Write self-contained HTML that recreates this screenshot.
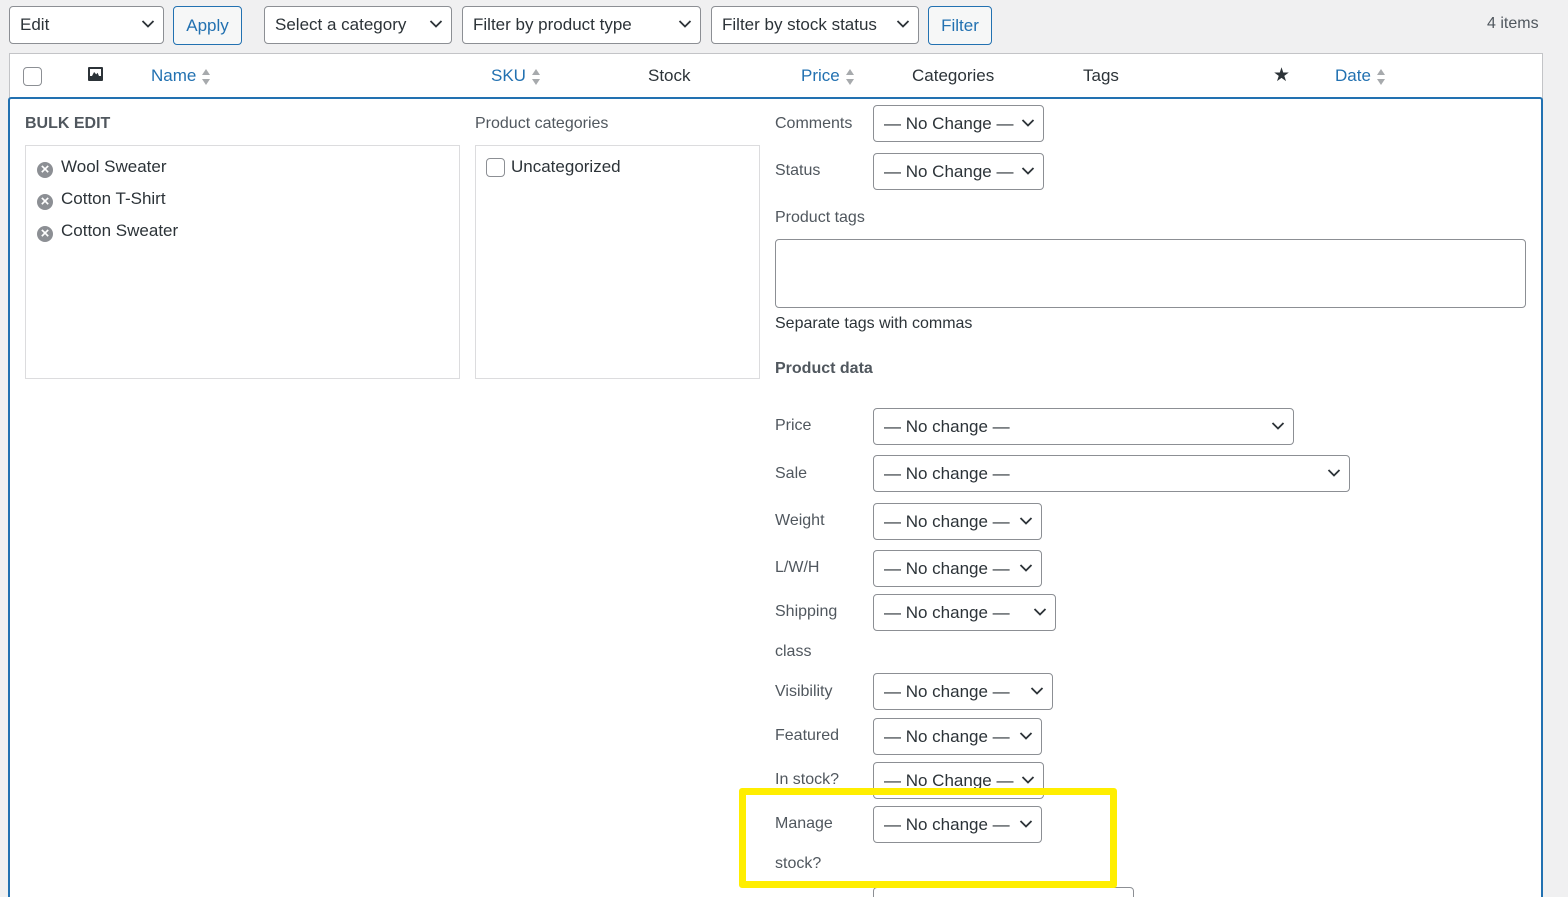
<!DOCTYPE html>
<html><head><meta charset="utf-8"><style>
*{box-sizing:border-box;margin:0;padding:0}
html,body{width:1568px;height:897px;overflow:hidden}
body{background:#f0f0f1;font-family:"Liberation Sans",sans-serif;color:#2c3338;font-size:17px;position:relative}
.a{position:absolute}
.sel{position:absolute;background:#fff;border:1px solid #8c8f94;border-radius:4px;height:38px;padding-left:10px;line-height:36px;font-size:17px;color:#2c3338;white-space:nowrap}
.sel svg{position:absolute;right:8px;top:12px}
.btn{position:absolute;border:1px solid #2271b1;color:#2271b1;border-radius:4px;background:#f6f7f7;height:39px;line-height:37px;text-align:center;font-size:17px}
.lbl{position:absolute;font-size:16px;color:#50575e}
.blue{color:#2271b1}
.sort{display:inline-block;vertical-align:middle;margin-left:6px;width:9px;height:16px;position:relative}
.sort:before{content:"";position:absolute;top:0;left:0;border:4.5px solid transparent;border-bottom:6px solid #a7aaad;border-top:0}
.sort:after{content:"";position:absolute;bottom:0;left:0;border:4.5px solid transparent;border-top:6px solid #a7aaad;border-bottom:0}
.x{display:inline-block;width:16px;height:16px;border-radius:50%;background:#8c8f94;color:#fff;font-size:15px;line-height:16px;text-align:center;font-weight:bold;margin-right:8px;vertical-align:-2px}
</style></head><body>
<svg width="0" height="0" style="position:absolute"><defs><symbol id="ch" viewBox="0 0 14 10"><path d="M1.5 2 L7 7.5 L12.5 2" fill="none" stroke="#2c3338" stroke-width="1.8"/></symbol></defs></svg>

<div class="sel" style="left:9px;top:6px;width:155px">Edit<svg width="14" height="10"><use href="#ch"/></svg></div>
<div class="btn" style="left:173px;top:6px;width:69px">Apply</div>
<div class="sel" style="left:264px;top:6px;width:188px">Select a category<svg width="14" height="10"><use href="#ch"/></svg></div>
<div class="sel" style="left:462px;top:6px;width:239px">Filter by product type<svg width="14" height="10"><use href="#ch"/></svg></div>
<div class="sel" style="left:711px;top:6px;width:208px">Filter by stock status<svg width="14" height="10"><use href="#ch"/></svg></div>
<div class="btn" style="left:928px;top:6px;width:64px">Filter</div>
<div class="a" style="left:1487px;top:15px;font-size:16px;color:#50575e">4 items</div>

<div class="a" style="left:9px;top:53px;width:1534px;height:46px;background:#fff;border:1px solid #c3c4c7;border-bottom:none"></div>
<div class="a" style="left:23px;top:67px;width:19px;height:19px;border:1px solid #8c8f94;border-radius:4px;background:#fff"></div>
<div class="a" style="left:88px;top:67px;width:15px;height:14px;background:#2c3338;border-radius:1px"><div style="position:absolute;left:2px;top:2px;width:11px;height:7px;background:#fff"></div><div style="position:absolute;left:4px;top:5px;width:7px;height:4px;background:#2c3338;clip-path:polygon(0 100%,30% 0,60% 60%,80% 20%,100% 100%)"></div></div>
<div class="a blue" style="left:151px;top:66px">Name<span class="sort"></span></div>
<div class="a blue" style="left:491px;top:66px">SKU<span class="sort"></span></div>
<div class="a" style="left:648px;top:66px">Stock</div>
<div class="a blue" style="left:801px;top:66px">Price<span class="sort"></span></div>
<div class="a" style="left:912px;top:66px">Categories</div>
<div class="a" style="left:1083px;top:66px">Tags</div>
<div class="a" style="left:1273px;top:64px;font-size:19px">★</div>
<div class="a blue" style="left:1335px;top:66px">Date<span class="sort" style="width:9px"></span></div>

<div class="a" style="left:8px;top:97px;width:1535px;height:840px;background:#fff;border:2px solid #2271b1;border-radius:3px"></div>

<div class="a" style="left:25px;top:115px;font-size:16px;font-weight:bold;color:#50575e">BULK EDIT</div>
<div class="a" style="left:25px;top:145px;width:435px;height:234px;border:1px solid #dcdcde"></div>
<div class="a" style="left:37px;top:157px;font-size:17px"><span class="x">×</span>Wool Sweater</div>
<div class="a" style="left:37px;top:189px;font-size:17px"><span class="x">×</span>Cotton T-Shirt</div>
<div class="a" style="left:37px;top:221px;font-size:17px"><span class="x">×</span>Cotton Sweater</div>

<div class="lbl" style="left:475px;top:115px">Product categories</div>
<div class="a" style="left:475px;top:145px;width:285px;height:234px;border:1px solid #dcdcde"></div>
<div class="a" style="left:486px;top:158px;width:19px;height:19px;border:1px solid #8c8f94;border-radius:4px"></div>
<div class="a" style="left:511px;top:157px;font-size:17px">Uncategorized</div>

<div class="lbl" style="left:775px;top:115px">Comments</div>
<div class="sel" style="left:873px;top:105px;width:171px;height:37px">— No Change —<svg width="14" height="10"><use href="#ch"/></svg></div>
<div class="lbl" style="left:775px;top:162px">Status</div>
<div class="sel" style="left:873px;top:153px;width:171px;height:37px">— No Change —<svg width="14" height="10"><use href="#ch"/></svg></div>
<div class="lbl" style="left:775px;top:209px">Product tags</div>
<div class="a" style="left:775px;top:239px;width:751px;height:69px;border:1px solid #8c8f94;border-radius:4px"></div>
<div class="a" style="left:775px;top:315px;font-size:16px">Separate tags with commas</div>
<div class="lbl" style="left:775px;top:360px;font-weight:bold">Product data</div>

<div class="lbl" style="left:775px;top:417px">Price</div>
<div class="sel" style="left:873px;top:408px;width:421px;height:37px">— No change —<svg width="14" height="10"><use href="#ch"/></svg></div>
<div class="lbl" style="left:775px;top:465px">Sale</div>
<div class="sel" style="left:873px;top:455px;width:477px;height:37px">— No change —<svg width="14" height="10"><use href="#ch"/></svg></div>
<div class="lbl" style="left:775px;top:512px">Weight</div>
<div class="sel" style="left:873px;top:503px;width:169px;height:37px">— No change —<svg width="14" height="10"><use href="#ch"/></svg></div>
<div class="lbl" style="left:775px;top:559px">L/W/H</div>
<div class="sel" style="left:873px;top:550px;width:169px;height:37px">— No change —<svg width="14" height="10"><use href="#ch"/></svg></div>
<div class="lbl" style="left:775px;top:603px">Shipping</div>
<div class="lbl" style="left:775px;top:643px">class</div>
<div class="sel" style="left:873px;top:594px;width:183px;height:37px">— No change —<svg width="14" height="10"><use href="#ch"/></svg></div>
<div class="lbl" style="left:775px;top:683px">Visibility</div>
<div class="sel" style="left:873px;top:673px;width:180px;height:37px">— No change —<svg width="14" height="10"><use href="#ch"/></svg></div>
<div class="lbl" style="left:775px;top:727px">Featured</div>
<div class="sel" style="left:873px;top:718px;width:169px;height:37px">— No change —<svg width="14" height="10"><use href="#ch"/></svg></div>
<div class="lbl" style="left:775px;top:771px">In stock?</div>
<div class="sel" style="left:873px;top:762px;width:171px;height:37px">— No Change —<svg width="14" height="10"><use href="#ch"/></svg></div>
<div class="lbl" style="left:775px;top:815px">Manage</div>
<div class="lbl" style="left:775px;top:855px">stock?</div>
<div class="sel" style="left:873px;top:806px;width:169px;height:37px">— No change —<svg width="14" height="10"><use href="#ch"/></svg></div>
<div class="a" style="left:873px;top:887px;width:261px;height:20px;border:1px solid #8c8f94;border-radius:4px;background:#fff"></div>
<div class="a" style="left:739px;top:788px;width:378px;height:100px;border:7px solid #ffee00;border-radius:3px"></div>
</body></html>
